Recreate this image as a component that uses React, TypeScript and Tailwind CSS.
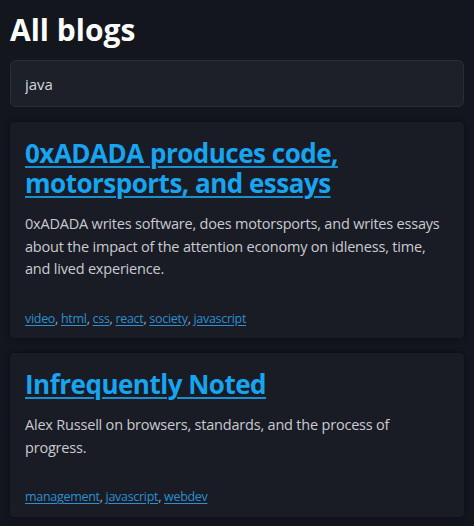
import React from "react";

const blogs = [
  {
    title: "0xADADA produces code, motorsports, and essays",
    description:
      "0xADADA writes software, does motorsports, and writes essays about the impact of the attention economy on idleness, time, and lived experience.",
    tags: ["video", "html", "css", "react", "society", "javascript"],
  },
  {
    title: "Infrequently Noted",
    description:
      "Alex Russell on browsers, standards, and the process of progress.",
    tags: ["management", "javascript", "webdev"],
  },
];

function BlogCard({ blog }: { blog: (typeof blogs)[number] }) {
  return (
    <div className="bg-[#191c25] rounded-sm shadow-[0_0_6px_rgba(0,0,0,0.45)] px-[15px] pt-[16px] pb-[10px]">
      <a
        href="#"
        className="block text-[26px] leading-[30px] font-bold tracking-[-0.5px] text-[#17a4f0] underline decoration-[1.5px] underline-offset-[3px] decoration-[#1a8fd0]"
      >
        {blog.title}
      </a>
      <p className="mt-[15px] text-[14.5px] leading-[22.5px] tracking-[-0.2px] text-[#c9cbd1]">
        {blog.description}
      </p>
      <div className="mt-[29px] text-[12.5px] tracking-[-0.3px] text-[#a8adb8]">
        {blog.tags.map((tag, i) => (
          <span key={tag}>
            <a href="#" className="text-[#2c8fd0] underline underline-offset-2">
              {tag}
            </a>
            {i < blog.tags.length - 1 && ", "}
          </span>
        ))}
      </div>
    </div>
  );
}

export default function App() {
  return (
    <div
      className="min-h-screen bg-[#14161e] px-[10px] pt-[10px] pb-4"
      style={{ fontFamily: "'Open Sans', 'Noto Sans', sans-serif" }}
    >
      <h1 className="text-[30px] leading-[40px] font-bold text-white">All blogs</h1>
      <input
        defaultValue="java"
        className="mt-[10px] w-full h-[47px] rounded-md bg-[#1d2029] border border-[#2a2d36] px-[14px] text-[15px] text-[#d4d6dc] outline-none"
      />
      <div className="mt-[15px] flex flex-col gap-[15px]">
        {blogs.map((b) => (
          <BlogCard key={b.title} blog={b} />
        ))}
      </div>
    </div>
  );
}
